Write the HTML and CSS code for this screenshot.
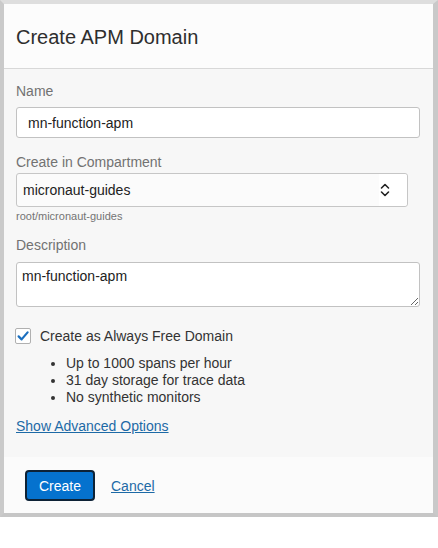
FILE: index.html
```html
<!DOCTYPE html>
<html>
<head>
<meta charset="utf-8">
<link rel="stylesheet" href="styles.css">
</head>
<body>
<div class="frame">
  <div class="panel">
    <div class="header"><h1 class="title">Create APM Domain</h1></div>
    <div class="content">
      <div class="label">Name</div>
      <input class="field name-field" type="text" value="mn-function-apm">
      <div class="label compartment-label">Create in Compartment</div>
      <div class="select">
        <span class="select-text">micronaut-guides</span>
        <span class="select-arrow">
          <svg width="10" height="16" viewBox="0 0 10 16"><path d="M1.5 6 L5 2.5 L8.5 6 M1.5 10 L5 13.5 L8.5 10" fill="none" stroke="#222" stroke-width="1.6" stroke-linecap="round" stroke-linejoin="round"/></svg>
        </span>
      </div>
      <div class="helper">root/micronaut-guides</div>
      <div class="label desc-label">Description</div>
      <textarea class="field area" readonly>mn-function-apm</textarea>
      <div class="check-row">
        <span class="checkbox"><svg width="14" height="14" viewBox="0 0 14 14"><path d="M2.6 7.4 L5.6 10.4 L11.6 3.4" fill="none" stroke="#1b6fbf" stroke-width="2.2" stroke-linecap="round" stroke-linejoin="round"/></svg></span>
        <span class="check-label">Create as Always Free Domain</span>
      </div>
      <ul class="bullets">
        <li>Up to 1000 spans per hour</li>
        <li>31 day storage for trace data</li>
        <li>No synthetic monitors</li>
      </ul>
      <a class="link advanced" href="#">Show Advanced Options</a>
    </div>
    <div class="footer">
      <button class="btn-primary">Create</button>
      <a class="link cancel" href="#">Cancel</a>
    </div>
  </div>
</div>
</body>
</html>
```
FILE: styles.css
```css
html, body {
  margin: 0;
  padding: 0;
  background: #ffffff;
}
body {
  font-family: "Liberation Sans", Arial, sans-serif;
  width: 438px;
  height: 548px;
}
.frame {
  width: 438px;
  box-sizing: border-box;
  border-style: solid;
  border-width: 4px 5px 4px 4px;
  border-color: #dedede #c9c9c9 #c6c6c6 #cacaca;
}
.panel {
  display: flex;
  flex-direction: column;
  height: 509px;
}
.header {
  height: 64px;
  background: #fcfcfc;
  border-bottom: 1px solid #d8d8d8;
  display: flex;
  align-items: center;
  padding-left: 12px;
}
.title {
  margin: 0;
  font-size: 20px;
  font-weight: normal;
  color: #2e2e2e;
  line-height: 24px;
  padding-top: 1px;
}
.content {
  background: #f7f7f7;
  padding: 12px 13px 21px 12px;
  display: flex;
  flex-direction: column;
  align-items: flex-start;
  flex: 1;
}
.label {
  font-size: 14px;
  line-height: 20px;
  color: #727272;
}
.field {
  box-sizing: border-box;
  width: 404px;
  border: 1px solid #c2c2c2;
  border-radius: 3px;
  background: #ffffff;
  font-family: "Liberation Sans", Arial, sans-serif;
  font-size: 14px;
  color: #222222;
  margin: 0;
  outline: none;
}
.name-field {
  height: 31px;
  margin-top: 6px;
  padding: 0 11px;
}
.compartment-label {
  margin-top: 14px;
}
.select {
  box-sizing: border-box;
  width: 392px;
  height: 34px;
  margin-top: 1px;
  border: 1px solid #c6c6c6;
  border-radius: 3px;
  background: #fbfbfb;
  display: flex;
  align-items: stretch;
}
.select-text {
  flex: 1;
  display: flex;
  align-items: center;
  padding-left: 6px;
  font-size: 14px;
  color: #222222;
}
.select-arrow {
  width: 27px;
  background: #ffffff;
  border-radius: 0 3px 3px 0;
  display: flex;
  align-items: center;
  justify-content: flex-start;
  padding-left: 1px;
}
.helper {
  margin-top: 2px;
  font-size: 11px;
  line-height: 14px;
  color: #747474;
}
.desc-label {
  margin-top: 12px;
}
.area {
  height: 45px;
  margin-top: 7px;
  padding: 4px 5px 2px 5px;
  line-height: 18px;
  resize: vertical;
  display: block;
}
.check-row {
  margin-top: 19px;
  display: flex;
  align-items: center;
  height: 20px;
}
.checkbox {
  box-sizing: border-box;
  width: 16px;
  height: 16px;
  border: 1px solid #b0b0b0;
  border-radius: 2px;
  background: #ffffff;
  display: flex;
  align-items: center;
  justify-content: center;
  margin-left: -1px;
}
.check-label {
  margin-left: 9px;
  font-size: 14px;
  line-height: 20px;
  color: #333333;
}
.bullets {
  margin: 9px 0 0 0;
  padding-left: 50px;
  font-size: 14px;
  line-height: 17px;
  color: #333333;
}
.bullets li {
  padding-left: 0;
}
.link {
  font-size: 14px;
  line-height: 20px;
  color: #1d6aa6;
  text-decoration: underline;
}
.advanced {
  margin-top: 10px;
}
.footer {
  height: 56px;
  box-sizing: border-box;
  background: #fbfbfb;
  padding: 13px 0 0 21px;
  display: flex;
  align-items: flex-start;
}
.btn-primary {
  box-sizing: border-box;
  width: 70px;
  height: 31px;
  background: #0572ce;
  border: 2px solid #0d2236;
  border-radius: 4px;
  color: #ffffff;
  font-family: "Liberation Sans", Arial, sans-serif;
  font-size: 14px;
  padding: 1px 0 0 0;
  margin: 0;
}
.cancel {
  margin-left: 16px;
  line-height: 32px;
}
```
